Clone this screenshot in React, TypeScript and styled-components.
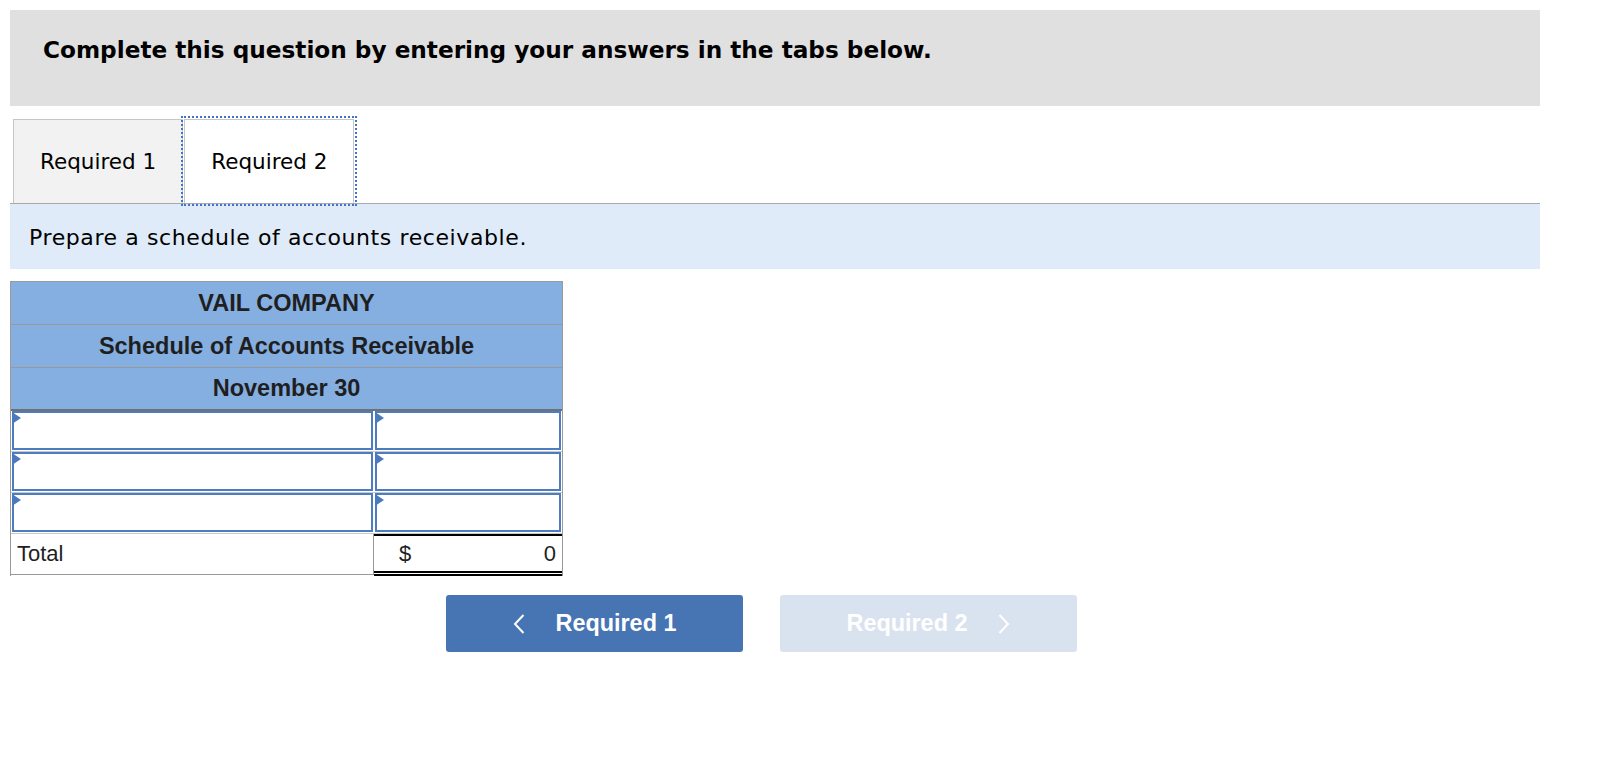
import React from 'react';
import styled, { createGlobalStyle } from 'styled-components';

const GlobalStyle = createGlobalStyle`
  body {
    margin: 0;
    background: #fff;
  }
`;

const Page = styled.div`
  padding: 10px;
  width: 1530px;
  font-family: "DejaVu Sans", Verdana, sans-serif;
  color: #000;
`;

const Banner = styled.div`
  height: 96px;
  box-sizing: border-box;
  padding: 26px 33px 0;
  background: #e0e0e0;
  font-size: 23.2px;
  line-height: 28px;
  font-weight: bold;
`;

const TabBar = styled.div`
  display: flex;
  margin-top: 13px;
  padding-left: 3px;
  border-bottom: 1px solid #a9a9a9;
`;

const Tab = styled.div<{ $active?: boolean }>`
  height: 84px;
  box-sizing: border-box;
  display: flex;
  align-items: center;
  padding: 0 26px;
  border: 1px solid #c6c6c6;
  border-bottom: none;
  background: ${({ $active }) => ($active ? '#fff' : '#f2f2f2')};
  font-size: 21.5px;
  margin-left: ${({ $active }) => ($active ? '1px' : '0')};
  outline: ${({ $active }) => ($active ? '2px dotted #4472c4' : 'none')};
  outline-offset: 1px;
`;

const Instruction = styled.div`
  height: 65px;
  box-sizing: border-box;
  display: flex;
  align-items: center;
  padding: 2px 0 0 19px;
  background: #dfebf8;
  font-size: 22px;
  letter-spacing: 0.6px;
`;

const Table = styled.div`
  margin-top: 12px;
  width: 553px;
  box-sizing: border-box;
  border: 1px solid #9a9a9a;
  border-bottom: none;
  font-family: "Liberation Sans", Arial, sans-serif;
`;

const TitleRow = styled.div<{ $last?: boolean }>`
  height: 43px;
  box-sizing: border-box;
  display: flex;
  align-items: center;
  justify-content: center;
  background: #85aee1;
  border-bottom: ${({ $last }) => ($last ? '2px solid #707070' : '1px solid #999')};
  font-size: 23.5px;
  font-weight: bold;
  color: #1f1f1f;
`;

const Row = styled.div`
  display: grid;
  grid-template-columns: 363px 188px;
`;

const InputCell = styled.div`
  position: relative;
  height: 41px;
  box-sizing: border-box;
  padding: 0 1px 1px;
  border-bottom: 1px solid #c9c9c9;
`;

const Field = styled.input`
  display: block;
  width: 100%;
  height: 100%;
  box-sizing: border-box;
  margin: 0;
  border: 2px solid #4e7cc0;
  background: #fff;
  outline: none;
`;

const Marker = styled.span`
  position: absolute;
  left: 1px;
  top: 1px;
  width: 0;
  height: 0;
  border-top: 6.5px solid transparent;
  border-bottom: 6.5px solid transparent;
  border-left: 9px solid #4a79bd;
`;

const TotalLabel = styled.div`
  height: 41px;
  box-sizing: border-box;
  display: flex;
  align-items: center;
  padding-left: 6px;
  border-right: 1px solid #999;
  border-bottom: 1px solid #999;
  font-size: 22px;
  color: #1f1f1f;
`;

const TotalAmount = styled.div`
  height: 42px;
  box-sizing: border-box;
  display: flex;
  align-items: center;
  justify-content: space-between;
  padding: 0 6px 0 25px;
  border-top: 2px solid #000;
  border-bottom: 5px double #000;
  font-size: 22px;
  color: #1f1f1f;
`;

const Nav = styled.div`
  display: flex;
  gap: 37px;
  margin-top: 19px;
  padding-left: 436px;
`;

const NavButton = styled.div<{ $disabled?: boolean }>`
  width: 297px;
  height: 57px;
  display: flex;
  align-items: center;
  justify-content: center;
  gap: 31px;
  border-radius: 3px;
  background: ${({ $disabled }) => ($disabled ? '#d9e3ef' : '#4774b3')};
  color: #fff;
  font-family: "Liberation Sans", Arial, sans-serif;
  font-size: 23.4px;
  font-weight: bold;
`;

const Chevron = ({ dir }: { dir: 'left' | 'right' }) => (
  <svg width="12" height="20" viewBox="0 0 12 20">
    <polyline
      points={dir === 'left' ? '10.5,1 2,10 10.5,19' : '1.5,1 10,10 1.5,19'}
      fill="none"
      stroke="#fff"
      strokeWidth="2"
    />
  </svg>
);

const inputRows = [0, 1, 2];

export default function App() {
  return (
    <Page>
      <GlobalStyle />
      <Banner>Complete this question by entering your answers in the tabs below.</Banner>
      <TabBar>
        <Tab>Required 1</Tab>
        <Tab $active>Required 2</Tab>
      </TabBar>
      <Instruction>Prepare a schedule of accounts receivable.</Instruction>
      <Table>
        <TitleRow>VAIL COMPANY</TitleRow>
        <TitleRow>Schedule of Accounts Receivable</TitleRow>
        <TitleRow $last>November 30</TitleRow>
        {inputRows.map((r) => (
          <Row key={r}>
            <InputCell>
              <Field />
              <Marker />
            </InputCell>
            <InputCell>
              <Field />
              <Marker />
            </InputCell>
          </Row>
        ))}
        <Row>
          <TotalLabel>Total</TotalLabel>
          <TotalAmount>
            <span>$</span>
            <span>0</span>
          </TotalAmount>
        </Row>
      </Table>
      <Nav>
        <NavButton>
          <Chevron dir="left" />
          <span>Required 1</span>
        </NavButton>
        <NavButton $disabled>
          <span>Required 2</span>
          <Chevron dir="right" />
        </NavButton>
      </Nav>
    </Page>
  );
}
